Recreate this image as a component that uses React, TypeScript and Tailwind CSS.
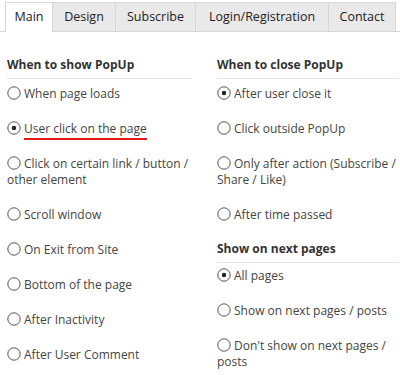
const leftItems = [
  { label: 'When page loads', checked: false },
  { label: 'User click on the page', checked: true, marked: true },
  { label: 'Click on certain link / button / other element', checked: false },
  { label: 'Scroll window', checked: false },
  { label: 'On Exit from Site', checked: false },
  { label: 'Bottom of the page', checked: false },
  { label: 'After Inactivity', checked: false },
  { label: 'After User Comment', checked: false },
];

const closeItems = [
  { label: 'After user close it', checked: true },
  { label: 'Click outside PopUp', checked: false },
  { label: 'Only after action (Subscribe / Share / Like)', checked: false },
  { label: 'After time passed', checked: false },
];

const pageItems = [
  { label: 'All pages', checked: true },
  { label: 'Show on next pages / posts', checked: false },
  { label: "Don't show on next pages / posts", checked: false },
];

const tabs = [
  { name: 'Main', w: 'w-[48px]' },
  { name: 'Design', w: 'w-[63px]' },
  { name: 'Subscribe', w: 'w-[80px]' },
  { name: 'Login/Registration', w: 'w-[133px]' },
  { name: 'Contact', w: 'w-[67px]' },
];

function Radio({ checked }: { checked: boolean }) {
  return (
    <svg width="14" height="14" viewBox="0 0 14 14" className="inline-block align-[-2px] mr-[3px]">
      <circle cx="7" cy="7" r="6.2" fill="#fff" stroke="#555" strokeWidth="1" />
      {checked && <circle cx="7" cy="7" r="2.2" fill="#222" />}
    </svg>
  );
}

function Option({ label, checked, marked }: { label: string; checked: boolean; marked?: boolean }) {
  return (
    <div className="leading-[16px] mb-[19px]">
      <Radio checked={checked} />
      <span className={marked ? 'border-b-2 border-[#e31b1b] pb-[1px]' : ''}>{label}</span>
    </div>
  );
}

function Heading({ children }: { children: string }) {
  return (
    <div className="font-bold text-[#333] pb-[5px] border-b border-[#e2e2e2] mb-[7px] leading-[16px]">{children}</div>
  );
}

export default function App() {
  return (
    <div className="w-[400px] h-[375px] bg-white overflow-hidden text-[12px] text-[#444]" style={{ fontFamily: '"Open Sans", "Noto Sans", sans-serif' }}>
      <div className="flex pt-[2px] pl-[5px] border-b border-[#d6d6d6]">
        {tabs.map((t, i) => (
          <div
            key={t.name}
            className={`${t.w} h-[29px] flex items-center justify-center text-[12.5px] border-t border-r border-[#d6d6d6] ${i === 0 ? 'bg-white border-l -mb-px h-[30px]' : 'bg-[#e9e9e9]'} text-[#222]`}
          >
            {t.name}
          </div>
        ))}
      </div>
      <div className="grid grid-cols-[185px_182px] gap-x-[25px] pl-[7px] pt-[25px]">
        <div>
          <Heading>When to show PopUp</Heading>
          {leftItems.map((it) => (
            <Option key={it.label} {...it} />
          ))}
        </div>
        <div>
          <Heading>When to close PopUp</Heading>
          {closeItems.map((it) => (
            <Option key={it.label} {...it} />
          ))}
          <div className="-mt-[1px]">
            <Heading>Show on next pages</Heading>
          </div>
          <div className="-mt-[2px]">
            {pageItems.map((it) => (
              <Option key={it.label} {...it} />
            ))}
          </div>
        </div>
      </div>
    </div>
  );
}
